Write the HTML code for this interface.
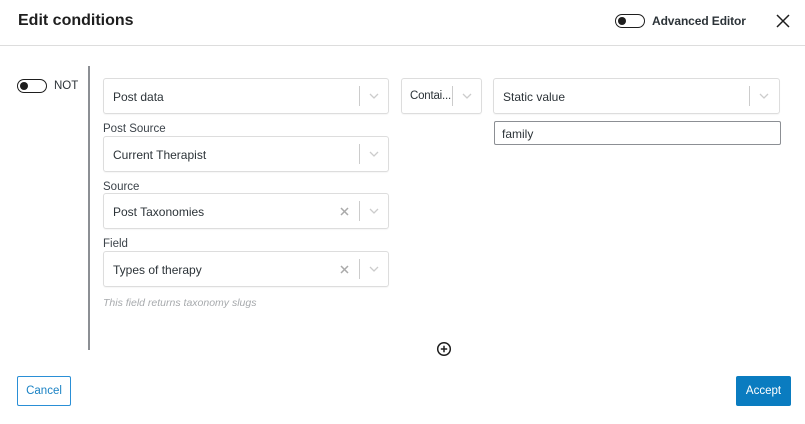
<!DOCTYPE html>
<html><head><style>
*{box-sizing:border-box;margin:0;padding:0}
body{width:805px;height:424px;background:#fff;font-family:"Liberation Sans",sans-serif;color:#1e1e1e;position:relative;overflow:hidden;font-size:12px}
.a{position:absolute}
.tog{position:absolute;width:30px;height:14px;border:1.5px solid #1e1e1e;border-radius:8px}
.tog:after{content:"";position:absolute;left:2px;top:1.5px;width:8px;height:8px;background:#1e1e1e;border-radius:50%}
.sel{position:absolute;border:1px solid #ddd;border-radius:3px;height:36px;box-shadow:0 1px 1px rgba(0,0,0,.04)}
.sel .t{position:absolute;left:9px;top:11px;font-size:12px;color:#2c3338}
.sel .d{position:absolute;top:7px;width:1px;height:20px;background:#ccc}
.sel svg{position:absolute;top:13px}
.lbl{position:absolute;left:103px;font-size:11.5px;color:#3c434a}
</style></head><body>
<div class="a" style="left:18px;top:12px;font-size:16px;font-weight:bold">Edit conditions</div>
<div class="tog" style="left:615px;top:14px"></div>
<div class="a" style="left:652px;top:14px;font-size:12px;font-weight:bold;color:#2c3338;letter-spacing:-0.1px">Advanced Editor</div>
<svg class="a" style="left:776px;top:14px" width="14" height="14"><path d="M1 1L13 13M13 1L1 13" stroke="#1e1e1e" stroke-width="1.5"/></svg>
<div class="a" style="left:0;top:45px;width:805px;height:1px;background:#ddd"></div>

<div class="tog" style="left:17px;top:79px"></div>
<div class="a" style="left:54px;top:80px;font-size:11.5px;color:#2c3338">NOT</div>
<div class="a" style="left:88px;top:66px;width:2px;height:284px;background:#8c8f94"></div>

<div class="sel" style="left:103px;top:78px;width:286px"><span class="t">Post data</span><span class="d" style="left:255px"></span><svg style="left:265px" width="10" height="8"><path d="M1 2L5 6L9 2" stroke="#ccc" fill="none" stroke-width="1.3"/></svg></div>
<div class="sel" style="left:401px;top:78px;width:81px"><span class="t" style="left:8px;font-size:11.5px;letter-spacing:-0.2px">Contai...</span><span class="d" style="left:50px"></span><svg style="left:60px" width="10" height="8"><path d="M1 2L5 6L9 2" stroke="#ccc" fill="none" stroke-width="1.3"/></svg></div>
<div class="sel" style="left:493px;top:78px;width:287px"><span class="t">Static value</span><span class="d" style="left:255px"></span><svg style="left:265px" width="10" height="8"><path d="M1 2L5 6L9 2" stroke="#ccc" fill="none" stroke-width="1.3"/></svg></div>
<div class="a" style="left:494px;top:121px;width:287px;height:24px;border:1px solid #8c8f94;border-radius:2px;padding:5px 7px;font-size:12px;color:#2c3338">family</div>

<div class="lbl" style="top:123px">Post Source</div>
<div class="sel" style="left:103px;top:136px;width:286px"><span class="t">Current Therapist</span><span class="d" style="left:255px"></span><svg style="left:265px" width="10" height="8"><path d="M1 2L5 6L9 2" stroke="#ccc" fill="none" stroke-width="1.3"/></svg></div>
<div class="lbl" style="top:181px">Source</div>
<div class="sel" style="left:103px;top:193px;width:286px"><span class="t">Post Taxonomies</span><svg style="left:236px;top:13px" width="9" height="9"><path d="M1 1L8 8M8 1L1 8" stroke="#aaa" stroke-width="1.5"/></svg><span class="d" style="left:255px"></span><svg style="left:265px" width="10" height="8"><path d="M1 2L5 6L9 2" stroke="#ccc" fill="none" stroke-width="1.3"/></svg></div>
<div class="lbl" style="top:238px">Field</div>
<div class="sel" style="left:103px;top:251px;width:286px"><span class="t">Types of therapy</span><svg style="left:236px;top:13px" width="9" height="9"><path d="M1 1L8 8M8 1L1 8" stroke="#aaa" stroke-width="1.5"/></svg><span class="d" style="left:255px"></span><svg style="left:265px" width="10" height="8"><path d="M1 2L5 6L9 2" stroke="#ccc" fill="none" stroke-width="1.3"/></svg></div>
<div class="a" style="left:103px;top:297px;font-size:10.5px;font-style:italic;color:#a7aaad">This field returns taxonomy slugs</div>

<svg class="a" style="left:436px;top:341px" width="16" height="16"><circle cx="8" cy="8" r="6.3" stroke="#1e1e1e" stroke-width="1.5" fill="none"/><path d="M8 4.8V11.2M4.8 8H11.2" stroke="#1e1e1e" stroke-width="1.5"/></svg>

<div class="a" style="left:17px;top:376px;width:54px;height:30px;border:1px solid #2a8fd6;border-radius:2px;color:#1a82c4;font-size:11.5px;text-align:center;line-height:29px">Cancel</div>
<div class="a" style="left:736px;top:376px;width:55px;height:30px;background:#0a7cc0;border-radius:2px;color:#fff;font-size:11.5px;text-align:center;line-height:31px">Accept</div>
</body></html>
